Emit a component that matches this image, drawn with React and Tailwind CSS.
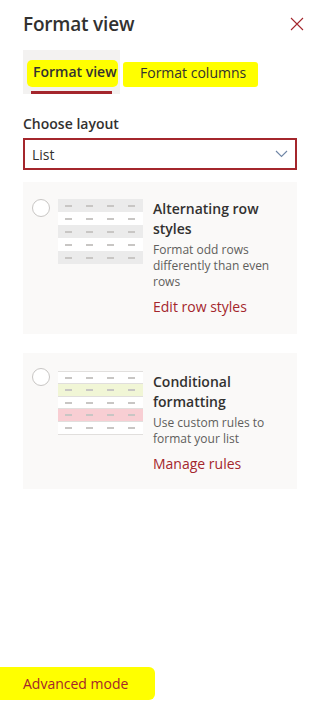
const font = { fontFamily: '"Open Sans", "Liberation Sans", sans-serif' };

function RowDashes() {
  return (
    <div className="flex h-full items-center gap-[14px] pl-[7px]">
      <span className="h-[2px] w-[7px] bg-[#c8c6c4]" />
      <span className="h-[2px] w-[7px] bg-[#c8c6c4]" />
      <span className="h-[2px] w-[7px] bg-[#c8c6c4]" />
      <span className="h-[2px] w-[7px] bg-[#c8c6c4]" />
    </div>
  );
}

function AlternatingPreview() {
  return (
    <div className="flex w-[85px] shrink-0 flex-col">
      <div className="h-[13px] bg-[#ebebeb]"><RowDashes /></div>
      <div className="h-[13px] bg-white"><RowDashes /></div>
      <div className="h-[13px] bg-[#ebebeb]"><RowDashes /></div>
      <div className="h-[13px] bg-white"><RowDashes /></div>
      <div className="h-[13px] bg-[#ebebeb]"><RowDashes /></div>
    </div>
  );
}

function ConditionalPreview() {
  return (
    <div className="flex w-[85px] shrink-0 flex-col border-y border-[#e1dfdd]">
      <div className="h-[12px] border-b border-[#e1dfdd] bg-white"><RowDashes /></div>
      <div className="h-[13px] border-b border-[#e1dfdd] bg-[#f1f6d6]"><RowDashes /></div>
      <div className="h-[12px] border-b border-[#e1dfdd] bg-white"><RowDashes /></div>
      <div className="h-[13px] border-b border-[#e1dfdd] bg-[#f8ced3]"><RowDashes /></div>
      <div className="h-[12px] bg-white"><RowDashes /></div>
    </div>
  );
}

function LayoutCard({ preview, title, description, link, className }) {
  return (
    <div className={`flex bg-[#faf9f8] pl-[9px] pr-3 ${className}`}>
      <span className="h-[18px] w-[18px] shrink-0 rounded-full border border-[#c8c6c4] bg-white" />
      <div className="ml-2">{preview}</div>
      <div className="ml-[10px] flex flex-col">
        <p className="text-[14px] font-semibold leading-[20px] text-[#323130]">{title}</p>
        <p className="mt-[3px] text-[12px] leading-[16px] text-[#605e5c]">{description}</p>
        <a className="mt-[7px] text-[14px] leading-[20px] text-[#a4262c]">{link}</a>
      </div>
    </div>
  );
}

export default function App() {
  return (
    <div style={font} className="flex h-[702px] w-[320px] flex-col bg-white px-[23px]">
      <div className="flex items-start justify-between pt-[10px]">
        <h1 className="text-[19px] font-semibold leading-[28px] tracking-[-0.2px] text-[#323130]">Format view</h1>
        <svg className="mr-[-7px] mt-[7px]" width="14" height="14" viewBox="0 0 14 14">
          <path d="M1 1 L13 13 M13 1 L1 13" stroke="#a4262c" strokeWidth="1.1" fill="none" />
        </svg>
      </div>

      <div className="mt-3 flex h-[44px] items-start">
        <div className="relative h-[44px] w-[97px] bg-[#f3f2f1]">
          <div className="absolute left-[4px] top-[10px] h-[27px] w-[91px] rounded-[5px] bg-[#ffff00]" />
          <span className="absolute left-[10px] top-[12px] text-[14px] font-semibold leading-[20px] text-[#323130]">Format view</span>
          <span className="absolute bottom-0 left-[8px] h-[3px] w-[81px] bg-[#a4262c]" />
        </div>
        <div className="relative ml-[3px] mt-[12px] h-[25px] w-[135px] rounded-[3px] bg-[#ffff00]">
          <span className="absolute left-[17px] top-[0px] text-[14px] leading-[22px] text-[#323130]">Format columns</span>
        </div>
      </div>

      <p className="mt-5 text-[14px] font-semibold leading-[20px] text-[#323130]">Choose layout</p>
      <div className="mt-1 flex h-[32px] items-center justify-between border-2 border-[#a4262c] pl-[7px] pr-[7px]">
        <span className="text-[14px] text-[#323130]">List</span>
        <svg width="13" height="8" viewBox="0 0 13 8">
          <path d="M1 1 L6.5 6.5 L12 1" stroke="#6f86a6" strokeWidth="1.1" fill="none" />
        </svg>
      </div>

      <LayoutCard
        className="mt-3 h-[152px] pt-[17px]"
        preview={<AlternatingPreview />}
        title="Alternating row styles"
        description="Format odd rows differently than even rows"
        link="Edit row styles"
      />

      <LayoutCard
        className="mt-[19px] h-[136px] pt-[15px]"
        preview={<div className="mt-[3px]"><ConditionalPreview /></div>}
        title={<span className="mt-[4px] block">Conditional formatting</span>}
        description="Use custom rules to format your list"
        link="Manage rules"
      />

      <div className="mt-auto mb-[2px] ml-[-23px] flex h-[33px] w-[155px] items-center rounded-r-[6px] bg-[#ffff00] pl-[23px]">
        <span className="text-[14px] text-[#a4262c]">Advanced mode</span>
      </div>
    </div>
  );
}
